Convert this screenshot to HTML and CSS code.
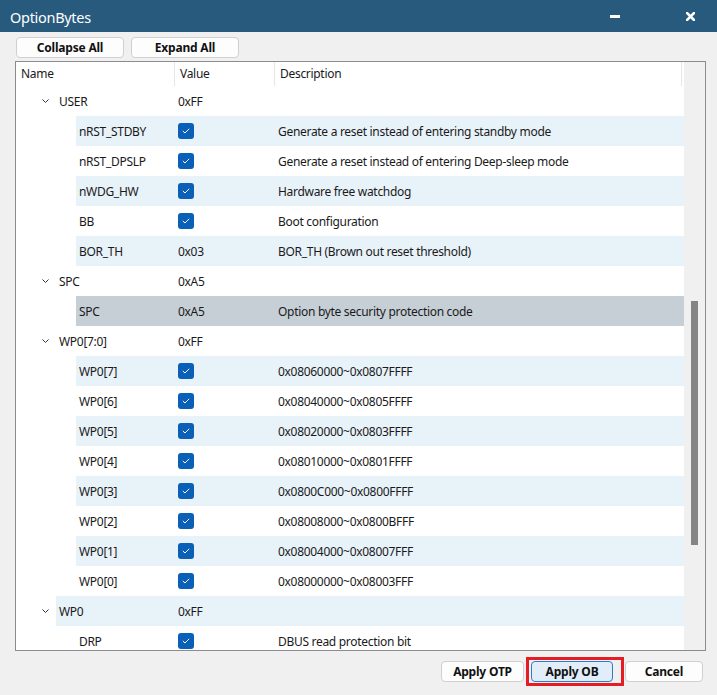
FILE: index.html
```html
<!DOCTYPE html>
<html>
<head>
<meta charset="utf-8">
<link rel="stylesheet" href="styles.css">
</head>
<body>
<div class="window">
  <div class="titlebar">
    <span class="title">OptionBytes</span>
    <div class="winctl">
      <span class="minbtn"></span>
      <svg class="closebtn" width="9" height="9" viewBox="0 0 9 9"><path d="M1 1L8 8M8 1L1 8" stroke="#fff" stroke-width="2.6" stroke-linecap="square"/></svg>
    </div>
  </div>
  <div class="toolbar">
    <button class="btn top">Collapse All</button>
    <button class="btn top">Expand All</button>
  </div>
  <div class="tree">
    <div class="content">
      <div class="head">
        <div class="hc hname">Name</div>
        <div class="hc hval">Value</div>
        <div class="hc hdesc">Description</div>
      </div>
      <div class="rows">
        <div class="row parent"><div class="indent"><svg class="chev" width="7" height="4" viewBox="0 0 7 4"><path d="M0.5 0.5L3.5 3.5L6.5 0.5" fill="none" stroke="#333" stroke-width="1"/></svg></div><div class="cells"><div class="name">USER</div><div class="val">0xFF</div><div class="desc"></div></div></div>
        <div class="row child alt"><div class="indent"></div><div class="cells"><div class="name">nRST_STDBY</div><div class="val"><span class="cb"><svg width="8" height="6" viewBox="0 0 8 6"><path d="M0.8 3L3 5L7.2 0.8" fill="none" stroke="#fff" stroke-width="1"/></svg></span></div><div class="desc">Generate a reset instead of entering standby mode</div></div></div>
        <div class="row child"><div class="indent"></div><div class="cells"><div class="name">nRST_DPSLP</div><div class="val"><span class="cb"><svg width="8" height="6" viewBox="0 0 8 6"><path d="M0.8 3L3 5L7.2 0.8" fill="none" stroke="#fff" stroke-width="1"/></svg></span></div><div class="desc">Generate a reset instead of entering Deep-sleep mode</div></div></div>
        <div class="row child alt"><div class="indent"></div><div class="cells"><div class="name">nWDG_HW</div><div class="val"><span class="cb"><svg width="8" height="6" viewBox="0 0 8 6"><path d="M0.8 3L3 5L7.2 0.8" fill="none" stroke="#fff" stroke-width="1"/></svg></span></div><div class="desc">Hardware free watchdog</div></div></div>
        <div class="row child"><div class="indent"></div><div class="cells"><div class="name">BB</div><div class="val"><span class="cb"><svg width="8" height="6" viewBox="0 0 8 6"><path d="M0.8 3L3 5L7.2 0.8" fill="none" stroke="#fff" stroke-width="1"/></svg></span></div><div class="desc">Boot configuration</div></div></div>
        <div class="row child alt"><div class="indent"></div><div class="cells"><div class="name">BOR_TH</div><div class="val">0x03</div><div class="desc">BOR_TH (Brown out reset threshold)</div></div></div>
        <div class="row parent"><div class="indent"><svg class="chev" width="7" height="4" viewBox="0 0 7 4"><path d="M0.5 0.5L3.5 3.5L6.5 0.5" fill="none" stroke="#333" stroke-width="1"/></svg></div><div class="cells"><div class="name">SPC</div><div class="val">0xA5</div><div class="desc"></div></div></div>
        <div class="row child sel"><div class="indent"></div><div class="cells"><div class="name">SPC</div><div class="val">0xA5</div><div class="desc">Option byte security protection code</div></div></div>
        <div class="row parent"><div class="indent"><svg class="chev" width="7" height="4" viewBox="0 0 7 4"><path d="M0.5 0.5L3.5 3.5L6.5 0.5" fill="none" stroke="#333" stroke-width="1"/></svg></div><div class="cells"><div class="name">WP0[7:0]</div><div class="val">0xFF</div><div class="desc"></div></div></div>
        <div class="row child alt"><div class="indent"></div><div class="cells"><div class="name">WP0[7]</div><div class="val"><span class="cb"><svg width="8" height="6" viewBox="0 0 8 6"><path d="M0.8 3L3 5L7.2 0.8" fill="none" stroke="#fff" stroke-width="1"/></svg></span></div><div class="desc">0x08060000~0x0807FFFF</div></div></div>
        <div class="row child"><div class="indent"></div><div class="cells"><div class="name">WP0[6]</div><div class="val"><span class="cb"><svg width="8" height="6" viewBox="0 0 8 6"><path d="M0.8 3L3 5L7.2 0.8" fill="none" stroke="#fff" stroke-width="1"/></svg></span></div><div class="desc">0x08040000~0x0805FFFF</div></div></div>
        <div class="row child alt"><div class="indent"></div><div class="cells"><div class="name">WP0[5]</div><div class="val"><span class="cb"><svg width="8" height="6" viewBox="0 0 8 6"><path d="M0.8 3L3 5L7.2 0.8" fill="none" stroke="#fff" stroke-width="1"/></svg></span></div><div class="desc">0x08020000~0x0803FFFF</div></div></div>
        <div class="row child"><div class="indent"></div><div class="cells"><div class="name">WP0[4]</div><div class="val"><span class="cb"><svg width="8" height="6" viewBox="0 0 8 6"><path d="M0.8 3L3 5L7.2 0.8" fill="none" stroke="#fff" stroke-width="1"/></svg></span></div><div class="desc">0x08010000~0x0801FFFF</div></div></div>
        <div class="row child alt"><div class="indent"></div><div class="cells"><div class="name">WP0[3]</div><div class="val"><span class="cb"><svg width="8" height="6" viewBox="0 0 8 6"><path d="M0.8 3L3 5L7.2 0.8" fill="none" stroke="#fff" stroke-width="1"/></svg></span></div><div class="desc">0x0800C000~0x0800FFFF</div></div></div>
        <div class="row child"><div class="indent"></div><div class="cells"><div class="name">WP0[2]</div><div class="val"><span class="cb"><svg width="8" height="6" viewBox="0 0 8 6"><path d="M0.8 3L3 5L7.2 0.8" fill="none" stroke="#fff" stroke-width="1"/></svg></span></div><div class="desc">0x08008000~0x0800BFFF</div></div></div>
        <div class="row child alt"><div class="indent"></div><div class="cells"><div class="name">WP0[1]</div><div class="val"><span class="cb"><svg width="8" height="6" viewBox="0 0 8 6"><path d="M0.8 3L3 5L7.2 0.8" fill="none" stroke="#fff" stroke-width="1"/></svg></span></div><div class="desc">0x08004000~0x08007FFF</div></div></div>
        <div class="row child"><div class="indent"></div><div class="cells"><div class="name">WP0[0]</div><div class="val"><span class="cb"><svg width="8" height="6" viewBox="0 0 8 6"><path d="M0.8 3L3 5L7.2 0.8" fill="none" stroke="#fff" stroke-width="1"/></svg></span></div><div class="desc">0x08000000~0x08003FFF</div></div></div>
        <div class="row parent alt"><div class="indent"><svg class="chev" width="7" height="4" viewBox="0 0 7 4"><path d="M0.5 0.5L3.5 3.5L6.5 0.5" fill="none" stroke="#333" stroke-width="1"/></svg></div><div class="cells"><div class="name">WP0</div><div class="val">0xFF</div><div class="desc"></div></div></div>
        <div class="row child"><div class="indent"></div><div class="cells"><div class="name">DRP</div><div class="val"><span class="cb"><svg width="8" height="6" viewBox="0 0 8 6"><path d="M0.8 3L3 5L7.2 0.8" fill="none" stroke="#fff" stroke-width="1"/></svg></span></div><div class="desc">DBUS read protection bit</div></div></div>
      </div>
    </div>
    <div class="scrollbar"><div class="thumb"></div></div>
  </div>
  <div class="footer">
    <button class="btn foot otp">Apply OTP</button>
    <div class="mark"><button class="btn foot ob">Apply OB</button></div>
    <button class="btn foot cancel">Cancel</button>
  </div>
</div>
</body>
</html>
```

FILE: styles.css
```css
* { box-sizing: border-box; }
html, body { margin: 0; padding: 0; }
body {
  background: #f0f0f0;
  font-family: "Noto Sans", "DejaVu Sans", sans-serif;
  font-size: 12px;
  color: #1a1a1a;
  width: 717px;
  height: 695px;
  overflow: hidden;
}
.window { width: 717px; height: 695px; display: flex; flex-direction: column; }
.titlebar {
  height: 32px;
  background: #285a7e;
  display: flex;
  align-items: center;
  justify-content: space-between;
  padding-left: 10px;
  color: #fff;
}
.title { font-size: 14.5px; letter-spacing: -0.3px; padding-top: 2px; }
.winctl { display: flex; align-items: center; height: 100%; }
.minbtn { width: 10px; height: 3px; background: #fff; margin-right: 66px; margin-top: 1px; }
.closebtn { margin-right: 22px; }
.toolbar { display: flex; gap: 7px; padding: 5px 0 0 16px; }
.btn {
  font-family: "Noto Sans", "DejaVu Sans", sans-serif;
  font-weight: bold;
  font-size: 12px;
  letter-spacing: -0.2px;
  background: #fdfdfd;
  border: 1px solid #d0d0d0;
  border-radius: 4px;
  color: #111;
  height: 21px;
  padding: 0;
  line-height: 19px;
}
.btn.top { width: 108px; }
.tree {
  margin: 3px 0 0 15px;
  width: 691px;
  height: 590px;
  border: 1px solid #8b8b90;
  background: #fff;
  display: flex;
  overflow: hidden;
  letter-spacing: -0.3px;
}
.content { width: 668px; overflow: hidden; }
.head { display: flex; height: 24px; align-items: stretch; }
.hc { border-right: 1px solid #e6e6e6; padding-left: 5px; line-height: 23px; }
.hname { width: 159px; }
.hval { width: 100px; }
.hdesc { width: 407px; }
.rows { display: flex; flex-direction: column; }
.row { display: flex; height: 30px; flex: none; }
.indent { flex: none; display: flex; align-items: center; }
.parent .indent { width: 40px; padding-left: 26px; }
.child .indent { width: 60px; }
.chev { display: block; margin-top: -1px; }
.cells { flex: 1; display: flex; align-items: center; }
.row.alt .cells { background: #e8f2f9; }
.row.sel .cells { background: #c6ced6; }
.name { padding-left: 3px; }
.parent .name { width: 122px; }
.child .name { width: 102px; }
.val { width: 100px; display: flex; align-items: center; }
.desc { flex: 1; white-space: nowrap; }
.cb {
  width: 16px; height: 16px;
  border-radius: 3px;
  background: #0a5fb6;
  display: flex; align-items: center; justify-content: center;
}
.cb svg { display: block; }
.scrollbar { width: 21px; background: #f0f0f0; padding: 239px 0 0 7px; }
.thumb { width: 7px; height: 244px; background: #858585; }
.footer {
  display: flex;
  justify-content: flex-end;
  align-items: center;
  padding: 6px 14px 0 0;
}
.otp { width: 83px; margin-right: 2px; }
.mark { border: 3px solid #e51c23; padding: 1px 8px 1px 2px; margin-right: 1px; display: flex; }
.ob { width: 82px; background: #e1eef9; border-color: #2a7ccc; }
.cancel { width: 78px; }
```
